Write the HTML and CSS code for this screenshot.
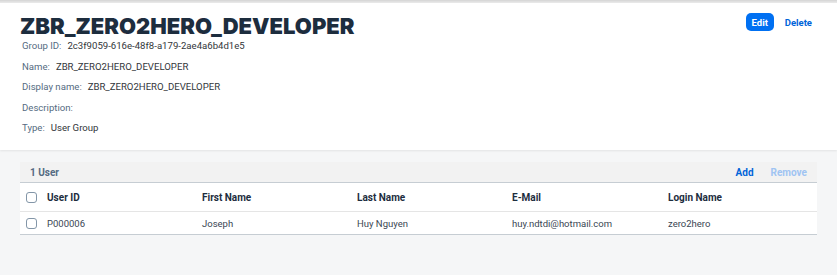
FILE: index.html
```html
<!DOCTYPE html>
<html>
<head>
<meta charset="utf-8">
<link rel="stylesheet" href="styles.css">
</head>
<body>
<div class="topbar"></div>
<header class="header">
  <div class="title-row">
    <h1 class="title">ZBR_ZERO2HERO_DEVELOPER</h1>
    <div class="actions">
      <button class="btn-primary">Edit</button>
      <button class="btn-link">Delete</button>
    </div>
  </div>
  <div class="info">
    <div class="line"><span class="label">Group ID:</span><span class="value">2c3f9059-616e-48f8-a179-2ae4a6b4d1e5</span></div>
    <div class="line"><span class="label">Name:</span><span class="value">ZBR_ZERO2HERO_DEVELOPER</span></div>
    <div class="line"><span class="label">Display name:</span><span class="value">ZBR_ZERO2HERO_DEVELOPER</span></div>
    <div class="line"><span class="label">Description:</span><span class="value"></span></div>
    <div class="line"><span class="label">Type:</span><span class="value">User Group</span></div>
  </div>
</header>
<main class="content">
  <section class="table">
    <div class="toolbar">
      <span class="count">1 User</span>
      <div class="tb-actions">
        <span class="tb-link">Add</span>
        <span class="tb-link disabled">Remove</span>
      </div>
    </div>
    <div class="row head">
      <div class="cell sel"><span class="cb"></span></div>
      <div class="cell">User ID</div>
      <div class="cell">First Name</div>
      <div class="cell">Last Name</div>
      <div class="cell">E-Mail</div>
      <div class="cell">Login Name</div>
    </div>
    <div class="row data">
      <div class="cell sel"><span class="cb"></span></div>
      <div class="cell">P000006</div>
      <div class="cell">Joseph</div>
      <div class="cell">Huy Nguyen</div>
      <div class="cell">huy.ndtdi@hotmail.com</div>
      <div class="cell">zero2hero</div>
    </div>
  </section>
</main>
</body>
</html>
```
FILE: styles.css
```css
* { box-sizing: border-box; }
html, body { margin: 0; padding: 0; }
body {
  background: #f5f6f7;
  font-family: Roboto, "Liberation Sans", Arial, sans-serif;
  font-size: 9.5px;
  color: #32363a;
  width: 837px;
  height: 275px;
  overflow: hidden;
}
.topbar {
  height: 3px;
  background: linear-gradient(#d4d4d4, #ececec);
}
.header {
  background: #fff;
  height: 147px;
  padding: 10px 20px 0 20px;
  box-shadow: 0 1px 2px rgba(0,0,0,0.08);
  position: relative;
}
.title-row {
  display: flex;
  justify-content: space-between;
  align-items: flex-start;
}
.title {
  margin: 0;
  font-family: Inter, "Open Sans", sans-serif;
  font-weight: 900;
  font-size: 22px;
  line-height: 26px;
  color: #1d2d3e;
}
.actions {
  display: flex;
  align-items: center;
  gap: 11px;
  margin-top: 0;
  margin-right: 5px;
}
.btn-primary {
  font-family: Roboto, "Liberation Sans", sans-serif;
  background: #0070f2;
  color: #fff;
  border: none;
  border-radius: 5px;
  font-weight: 700;
  font-size: 9.5px;
  height: 18px;
  width: 28px;
  padding: 0;
  margin-left: 1px;
}
.btn-link {
  font-family: Roboto, "Liberation Sans", sans-serif;
  background: none;
  border: none;
  color: #0064d9;
  font-weight: 700;
  font-size: 9.5px;
  padding: 0;
}
.info { margin-top: -3px; font-size: 9.6px; }
.line {
  height: 20.5px;
  line-height: 20.5px;
  padding-left: 2px;
}
.label { color: #556b82; margin-right: 6px; }
.value { color: #32363a; }
.content { padding: 12px 20px 0 20px; }
.table { background: #fff; }
.toolbar {
  height: 21px;
  background: #f2f2f2;
  border-bottom: 1px solid #c6cdd3;
  display: flex;
  align-items: center;
  justify-content: space-between;
  padding: 0 10px 0 10px;
  font-size: 10px;
}
.count { font-weight: 700; color: #556b82; }
.tb-actions { display: flex; gap: 17px; }
.tb-link { color: #0064d9; font-weight: 700; }
.tb-link.disabled { color: #9fc4f3; }
.row {
  display: grid;
  grid-template-columns: 27px 155px 155px 155px 156px 149px;
  align-items: center;
}
.row.head {
  height: 29px;
  border-bottom: 1px solid #e5e5e5;
  font-weight: 700;
  font-size: 10px;
  color: #1d2d3e;
}
.row.data {
  height: 23px;
  border-bottom: 1px solid #c6cdd3;
  color: #3a4653;
  padding-top: 1px;
}
.cell.sel { display: flex; padding-left: 6px; }
.cb {
  width: 11px;
  height: 11px;
  border: 1px solid #8396a8;
  border-radius: 3px;
  background: #fff;
}
```
